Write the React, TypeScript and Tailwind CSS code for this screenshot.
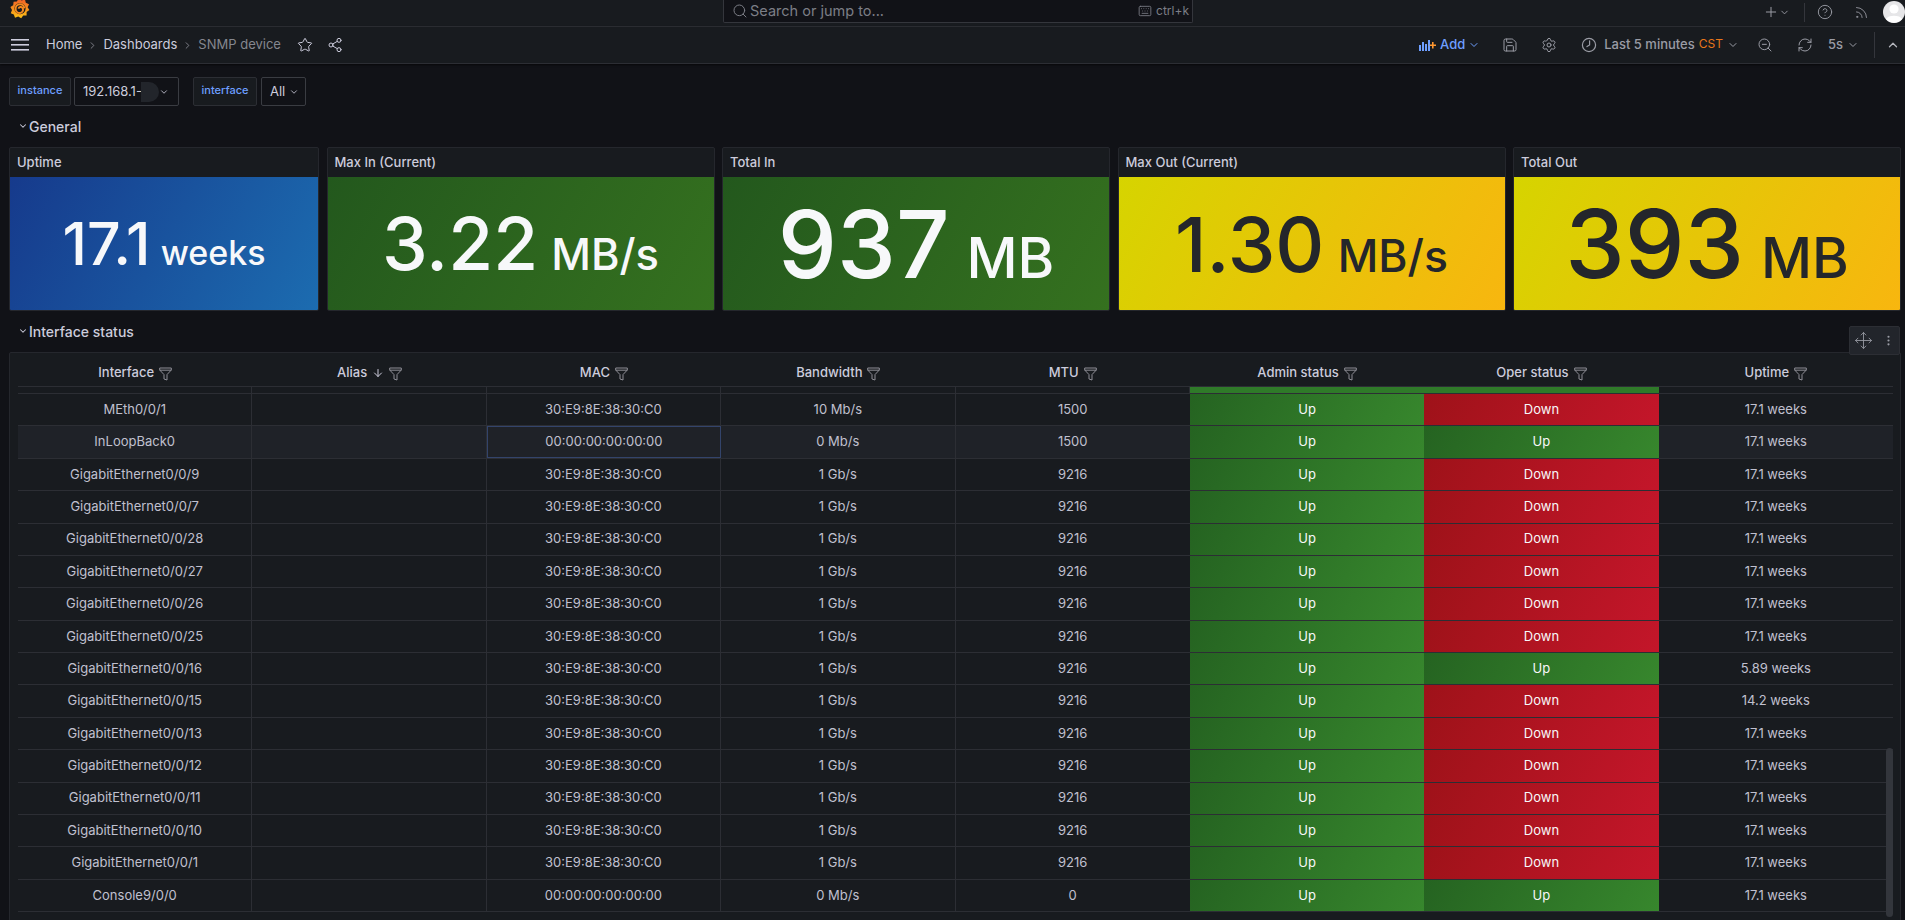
import { Search, Keyboard, Plus, ChevronDown, ChevronRight, ChevronUp, CircleHelp, Rss, Star, Share2, Save, Settings, ZoomOut, RefreshCw, Move, MoreVertical, ArrowDown } from "lucide-react";

type Row = [string, string, string, string, string, boolean, boolean, string];
const mac = "30:E9:8E:38:30:C0";
const zero = "00:00:00:00:00:00";
const rows: Row[] = [
  ["MEth0/0/1", "", mac, "10 Mb/s", "1500", true, false, "17.1 weeks"],
  ["InLoopBack0", "", zero, "0 Mb/s", "1500", true, true, "17.1 weeks"],
  ["GigabitEthernet0/0/9", "", mac, "1 Gb/s", "9216", true, false, "17.1 weeks"],
  ["GigabitEthernet0/0/7", "", mac, "1 Gb/s", "9216", true, false, "17.1 weeks"],
  ["GigabitEthernet0/0/28", "", mac, "1 Gb/s", "9216", true, false, "17.1 weeks"],
  ["GigabitEthernet0/0/27", "", mac, "1 Gb/s", "9216", true, false, "17.1 weeks"],
  ["GigabitEthernet0/0/26", "", mac, "1 Gb/s", "9216", true, false, "17.1 weeks"],
  ["GigabitEthernet0/0/25", "", mac, "1 Gb/s", "9216", true, false, "17.1 weeks"],
  ["GigabitEthernet0/0/16", "", mac, "1 Gb/s", "9216", true, true, "5.89 weeks"],
  ["GigabitEthernet0/0/15", "", mac, "1 Gb/s", "9216", true, false, "14.2 weeks"],
  ["GigabitEthernet0/0/13", "", mac, "1 Gb/s", "9216", true, false, "17.1 weeks"],
  ["GigabitEthernet0/0/12", "", mac, "1 Gb/s", "9216", true, false, "17.1 weeks"],
  ["GigabitEthernet0/0/11", "", mac, "1 Gb/s", "9216", true, false, "17.1 weeks"],
  ["GigabitEthernet0/0/10", "", mac, "1 Gb/s", "9216", true, false, "17.1 weeks"],
  ["GigabitEthernet0/0/1", "", mac, "1 Gb/s", "9216", true, false, "17.1 weeks"],
  ["Console9/0/0", "", zero, "0 Mb/s", "0", true, true, "17.1 weeks"],
];

const headers = ["Interface", "Alias", "MAC", "Bandwidth", "MTU", "Admin status", "Oper status", "Uptime"];

function Logo() {
  return (
    <svg width="20" height="22" viewBox="0 0 20 22" className="shrink-0">
      <defs>
        <linearGradient id="g" x1="0" y1="1" x2="0" y2="0">
          <stop offset="0" stopColor="#fcc015" />
          <stop offset="1" stopColor="#f05a28" />
        </linearGradient>
      </defs>
      <path d="M9 0 L11.5 2.5 L15 1.5 L15.8 4.8 L19 6.2 L17.6 9.2 L19.4 12 L16.6 14 L16.6 17.4 L13.2 17.4 L11.2 20.2 L8.2 18.6 L5 19.8 L3.8 16.6 L0.8 15.2 L2 12 L0.4 9 L3.2 7.2 L3.6 3.8 L6.8 3.6 Z" fill="url(#g)" />
      <circle cx="10" cy="10.6" r="5.6" fill="#181b1f" />
      <path d="M14.4 10.4 A4.4 4.4 0 1 0 10 15 A3.4 3.4 0 0 0 12.6 10 A2.4 2.4 0 0 0 8.4 10.6" fill="none" stroke="#f58a1f" strokeWidth="1.9" />
    </svg>
  );
}

function Hamburger() {
  return (
    <svg width="18" height="12" viewBox="0 0 18 12" className="shrink-0">
      <rect y="0" width="18" height="1.6" fill="#ccccdc" />
      <rect y="5" width="18" height="1.6" fill="#ccccdc" />
      <rect y="10" width="18" height="1.6" fill="#ccccdc" />
    </svg>
  );
}

function AddIcon() {
  return (
    <svg width="17" height="12" viewBox="0 0 17 12" className="shrink-0">
      <rect x="0" y="6" width="2" height="6" fill="#6e9fff" />
      <rect x="3" y="3" width="2" height="9" fill="#6e9fff" />
      <rect x="6" y="5" width="2" height="7" fill="#6e9fff" />
      <rect x="9" y="1" width="2" height="11" fill="#6e9fff" />
      <path d="M13 3 h1.6 v2.4 H17 V7 h-2.4 v2.4 H13 V7 h-2.4 V5.4 H13 z" fill="#ff9830" />
    </svg>
  );
}

function ClockIcon() {
  return (
    <svg width="16" height="16" viewBox="0 0 16 16" className="ml-[24px] shrink-0" fill="none" stroke="currentColor" strokeWidth="1.2" strokeLinecap="round">
      <circle cx="8" cy="8" r="6.6" />
      <path d="M8.6 3.8 V8 L6 9.6" />
    </svg>
  );
}

function Funnel() {
  return (
    <svg width="13" height="14" viewBox="0 0 13 14" className="ml-[5px] shrink-0 translate-y-[1px]" fill="none" stroke="#8e8e96" strokeWidth="1">
      <path d="M0.7 1 H12.3 V3 L8 7.6 V13 L5 12 V7.6 L0.7 3 Z" />
      <path d="M0.7 3.2 H12.3" />
    </svg>
  );
}

function Avatar() {
  return (
    <svg width="22" height="22" viewBox="0 0 22 22" className="shrink-0">
      <circle cx="11" cy="11" r="11" fill="#e6e6e8" />
      <circle cx="11" cy="8" r="4.6" fill="#fff" />
      <path d="M2.8 18 C5 13.5 17 13.5 19.2 18 A11 11 0 0 1 2.8 18 Z" fill="#fff" />
    </svg>
  );
}

function VarLabel({ text, width }: { text: string; width: string }) {
  return (
    <div className={`${width} h-[29px] flex items-center justify-center rounded-[2px] border border-[#2c2e34] bg-[#181b1f] text-[11px] font-medium text-[#6e9fff]`}>
      <span className="-translate-y-[1px]">{text}</span>
    </div>
  );
}

function Stat({ title, value, unit, vsize, usize, bg, dark, className }: { title: string; value: string; unit: string; vsize: string; usize: string; bg: string; dark?: boolean; className: string }) {
  return (
    <div className={`${className} flex flex-col rounded-[2px] border border-[#25272d] bg-[#181b1f] overflow-hidden`}>
      <div className="h-[29px] shrink-0 flex items-center px-[7px] text-[13px] font-medium text-[#ccccdc]">{title}</div>
      <div className={`flex-1 flex items-center justify-center font-medium ${bg} ${dark ? "text-[#24262b]" : "text-[#f7f8fa]"}`}>
        <div className="flex items-baseline">
          <span className={`${vsize} leading-none`}>{value}</span>
          <span className={`${usize} leading-none ml-[0.3em]`}>{unit}</span>
        </div>
      </div>
    </div>
  );
}

const GREEN = "bg-[linear-gradient(120deg,#256321,#37872d)]";
const RED = "bg-[linear-gradient(120deg,#9e1219,#c4162a)]";

function Cell({ children, bg, focus, line }: { children?: React.ReactNode; bg?: string; focus?: boolean; line?: boolean }) {
  return (
    <div className={`flex items-center justify-center min-w-0 text-[13px] ${bg ? `${bg} text-[#f7f8fa]` : "text-[#c0c0cf]"} ${focus ? "border border-[#33446b]" : ""} ${line && !focus ? "border-r border-[#2c2e34]" : ""}`}>
      {children}
    </div>
  );
}

export default function App() {
  return (
    <div className="relative h-[920px] w-[1905px] overflow-hidden bg-[#111217] font-['Inter','Liberation_Sans',sans-serif] text-[#ccccdc]">
      {/* top bar */}
      <div className="h-[27px] flex items-center border-b border-[#2c2e34] bg-[#181b1f]">
        <div className="w-[723px] shrink-0 pl-[10px] self-start -mt-[2px]"><Logo /></div>
        <div className="w-[470px] h-[23px] shrink-0 self-start flex items-center rounded-b-[2px] border border-t-0 border-[#34363c] bg-[#111217] pl-2 pr-[3px] text-[#7c7e86]">
          <Search size={16} strokeWidth={1.5} className="shrink-0" />
          <span className="ml-[2px] text-[14.5px]">Search or jump to...</span>
          <Keyboard size={14} strokeWidth={1.5} className="ml-auto" />
          <span className="ml-1 text-[12px]">ctrl+k</span>
        </div>
        <div className="flex-1 flex items-center text-[#9a9ca5] -translate-y-[1px]">
          <Plus size={16} strokeWidth={1.5} className="ml-[570px]" />
          <ChevronDown size={11} className="ml-[0px]" />
          <div className="ml-[14px] h-[19px] w-px bg-[#34363c]" />
          <CircleHelp size={16} strokeWidth={1.4} className="ml-[12px]" />
          <Rss size={15} strokeWidth={1.4} className="ml-[21px]" />
          <div className="ml-[14px] -mr-2"><Avatar /></div>
        </div>
      </div>

      {/* toolbar */}
      <div className="h-[37px] flex items-center border-b border-[#2c2e34] bg-[#181b1f] shadow-[0_1px_2px_rgba(0,0,0,0.6)] text-[13px]">
        <div className="ml-[11px]"><Hamburger /></div>
        <span className="ml-[17px] text-[#ccccdc]">Home</span>
        <ChevronRight size={11} className="mx-[5px] text-[#84868e]" />
        <span className="text-[#ccccdc]">Dashboards</span>
        <ChevronRight size={11} className="mx-[5px] text-[#84868e]" />
        <span className="text-[#85878f]">SNMP device</span>
        <Star size={16} strokeWidth={1.5} className="ml-[16px] text-[#ccccdc]" />
        <Share2 size={16} strokeWidth={1.5} className="ml-[14px] text-[#ccccdc]" />
        <div className="ml-auto flex items-center text-[#9a9ca5]">
          <AddIcon />
          <span className="ml-[4px] font-medium text-[#6e9fff]">Add</span>
          <ChevronDown size={12} className="ml-[3px] text-[#6e9fff]" />
          <Save size={16} strokeWidth={1.5} className="ml-[22px]" />
          <Settings size={16} strokeWidth={1.5} className="ml-[23px]" />
          <ClockIcon />
          <span className="ml-[7px] font-medium">Last 5 minutes</span>
          <span className="ml-[4px] -translate-y-[1px] text-[12px] text-[#e8761a]">CST</span>
          <ChevronDown size={12} className="ml-[4px]" />
          <ZoomOut size={16} strokeWidth={1.5} className="ml-[18px]" />
          <RefreshCw size={16} strokeWidth={1.5} className="ml-[24px]" />
          <span className="ml-[15px] font-medium">5s</span>
          <ChevronDown size={12} className="ml-[4px]" />
          <div className="ml-[15px] h-[26px] w-px bg-[#34363c]" />
          <ChevronUp size={14} strokeWidth={2.2} className="ml-[11px] mr-[5px] text-[#b4b6bd]" />
        </div>
      </div>

      {/* variables */}
      <div className="mt-[13px] ml-[9px] flex items-center text-[14px]">
        <VarLabel text="instance" width="w-[62px]" />
        <div className="relative ml-[3px] w-[105px] h-[29px] flex items-center rounded-[2px] border border-[#3a3c42] bg-[#111217] pl-2 text-[13px] text-[#ccccdc]">
          <span>192.168.1-</span>
          <div className="absolute left-[66px] top-[4px] h-[20px] w-[18px] rounded-r-full bg-[#22252b]" />
          <ChevronDown size={10} className="absolute right-[9px] text-[#ccccdc]" />
        </div>
        <div className="ml-[14px]"><VarLabel text="interface" width="w-[64px]" /></div>
        <div className="ml-1 w-[45px] h-[29px] flex items-center rounded-[2px] border border-[#3a3c42] bg-[#111217] pl-2 text-[13px] text-[#ccccdc]">
          <span>All</span>
          <ChevronDown size={10} className="ml-[4px]" />
        </div>
      </div>

      {/* General */}
      <div className="mt-[11px] ml-[18px] h-[18px] flex items-center text-[14px] font-medium">
        <ChevronDown size={10} strokeWidth={2.5} />
        <span className="ml-[1px]">General</span>
      </div>

      <div className="mt-[12px] ml-[9px] w-[1892px] h-[164px] flex gap-[7.5px]">
        <Stat className="w-[310px]" title="Uptime" value="17.1" unit="weeks" vsize="text-[59px]" usize="text-[34px]" bg="bg-[linear-gradient(120deg,#163a8c,#1c6cb0)]" />
        <Stat className="flex-1" title="Max In (Current)" value="3.22" unit="MB/s" vsize="text-[73px]" usize="text-[43.5px]" bg="bg-[linear-gradient(120deg,#23581d,#35711f)]" />
        <Stat className="flex-1" title="Total In" value="937" unit="MB" vsize="text-[94px]" usize="text-[56px]" bg="bg-[linear-gradient(120deg,#23581d,#35711f)]" />
        <Stat className="flex-1" title="Max Out (Current)" value="1.30" unit="MB/s" vsize="text-[76px]" usize="text-[44.5px]" bg="bg-[linear-gradient(120deg,#d6d400,#f8b60f)]" dark />
        <Stat className="flex-1" title="Total Out" value="393" unit="MB" vsize="text-[95px]" usize="text-[56px]" bg="bg-[linear-gradient(120deg,#d6d400,#f8b60f)]" dark />
      </div>

      {/* Interface status */}
      <div className="mt-[11px] ml-[18px] h-[18px] flex items-center text-[14px] font-medium">
        <ChevronDown size={10} strokeWidth={2.5} />
        <span className="ml-[1px]">Interface status</span>
      </div>

      <div className="relative mt-[12px] ml-[9px] w-[1892px] h-[600px] rounded-[2px] border border-[#25272d] bg-[#181b1f] pl-[8px] pr-[7px] overflow-hidden">
        <div className="grid grid-cols-8 h-[34px] pt-[6px] border-b border-[#2c2e34] text-[13px] font-medium text-[#ccccdc]">
          {headers.map((h) => (
            <div key={h} className="flex items-center justify-center">
              <span>{h}</span>
              {h === "Alias" && <ArrowDown size={12} strokeWidth={2} className="ml-[5px]" />}
              <Funnel />
            </div>
          ))}
        </div>
        {/* partial row scrolled under the header */}
        <div className="grid grid-cols-8 h-[7px] border-b border-[#2c2e34]">
          {headers.map((h, i) => (
            <div key={h} className={i === 5 || i === 6 ? "bg-[#2f7a29]" : i < 5 ? "border-r border-[#2c2e34]" : ""} />
          ))}
        </div>
        {rows.map((r, idx) => (
          <div key={idx} className={`grid grid-cols-8 h-[32.375px] border-b border-[#2c2e34] ${idx === 1 ? "bg-[#1f2228]" : ""}`}>
            <Cell line>{r[0]}</Cell>
            <div className="border-r border-[#2c2e34]" />
            <Cell focus={idx === 1} line>{r[2]}</Cell>
            <Cell line>{r[3]}</Cell>
            <Cell>{r[4]}</Cell>
            <Cell bg={GREEN}>Up</Cell>
            <Cell bg={r[6] ? GREEN : RED}>{r[6] ? "Up" : "Down"}</Cell>
            <Cell>{r[7]}</Cell>
          </div>
        ))}
        {/* scrollbar */}
        <div className="absolute right-[7px] top-[395px] h-[169px] w-[7px] rounded-full bg-[#33363c]" />
      </div>

      {/* panel hover header */}
      <div className="absolute left-[1849px] top-[326px] h-[29px] w-[51px] flex items-center rounded-[2px] border border-[#2c2e34] bg-[#22252b] text-[#9a9ca5]">
        <Move size={19} strokeWidth={1.1} className="ml-[4px]" />
        <MoreVertical size={13} className="ml-[9px]" />
      </div>
    </div>
  );
}
